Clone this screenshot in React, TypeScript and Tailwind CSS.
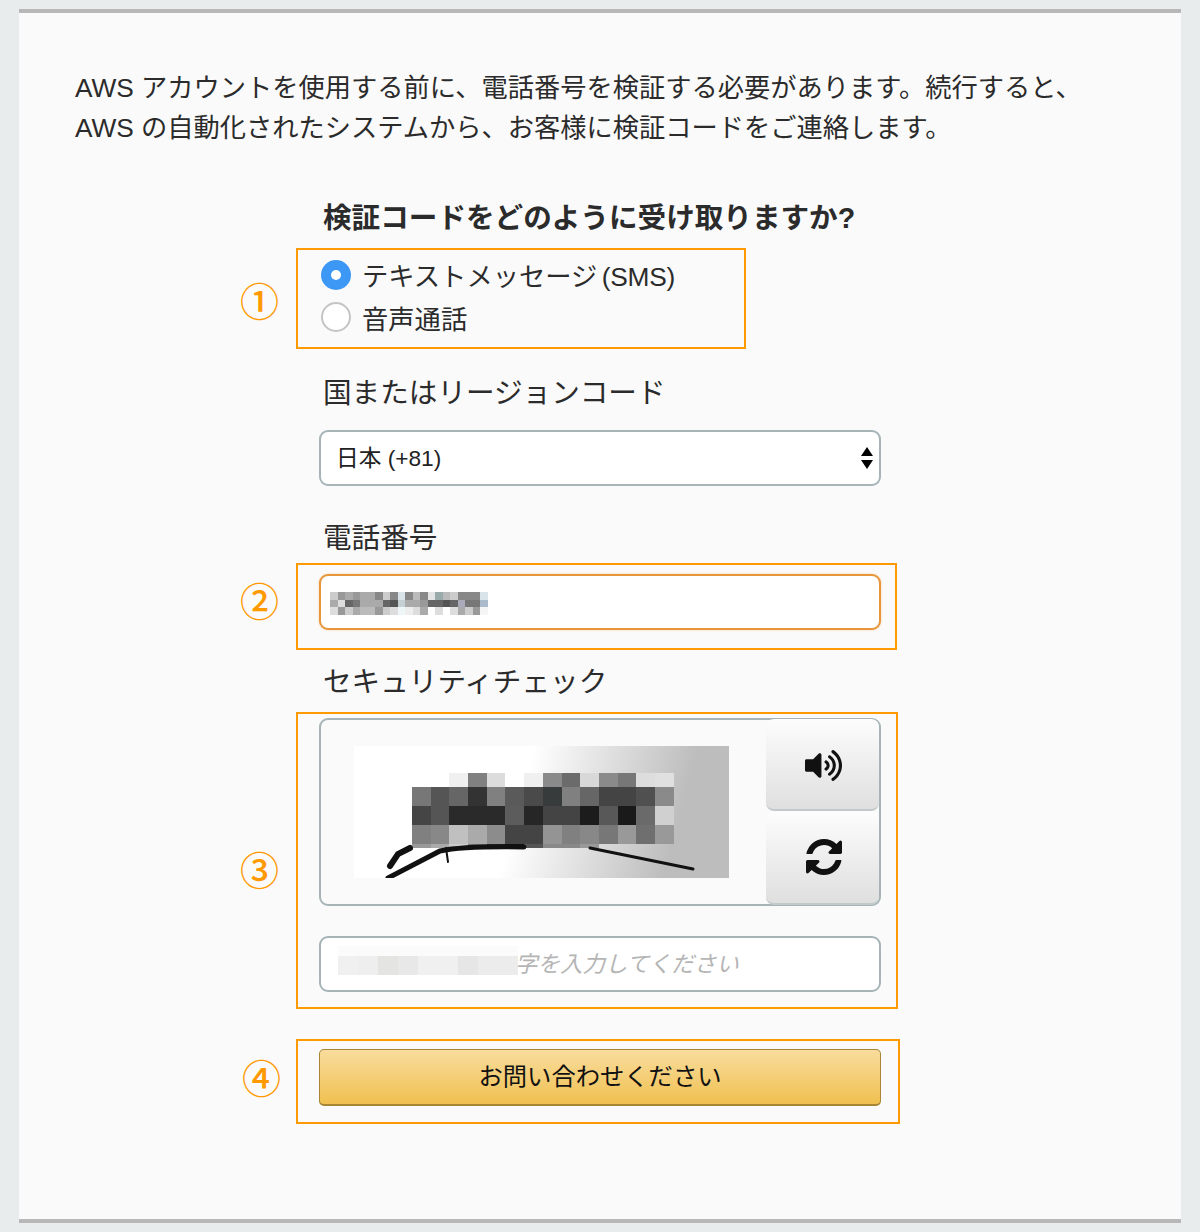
import { FaVolumeUp } from "react-icons/fa";

const FONT = "[font-family:'Liberation_Sans','Noto_Sans_CJK_JP',sans-serif]";

// Blurred-out bits of the picture, listed row by row.
const phoneMosaic = [
  ["#ccc", "#999", "#aaa", "#999", "#aaa", "#aaa", "#888", "#ccc", "#888", "#d8e4ea", "#888", "#bbb", "#888", "#e4e4e4", "#99aaaa", "#bbb", "#ccc", "#888", "#888", "#888", "#d8e4ea"],
  ["#aaa", "#ddd", "#666", "#777", "#aaa", "#aaa", "#aaa", "#666", "#555", "#c4d0d4", "#aaa", "#aaa", "#999", "#666", "#666", "#555", "#666", "#aaaabb", "#777", "#777", "#acbbcc"],
  ["#ddd", "#999", "#ccc", "#aaa", "#bbb", "#bbb", "#999", "#ccc", "#ddd", "#eef6f8", "#eee", "#ddd", "#aaa", "#fff", "#ddd", "#fff", "#ddd", "#aaa", "#ccc", "#999", "#f5f5f5"],
];

const captchaMosaic = [
  { h: 14, cells: ["", "", "#f0f0f0", "#808080", "#dcdcdc", "", "#f0f0f0", "#8a8a8a", "#6b6b6b", "#d8d8d8", "#8a8a8a", "#777", "#ddd", "#e0e0e0"] },
  { h: 19, cells: ["#777", "#555", "#666", "#333", "#808080", "#5a5a5a", "#4a4a4a", "#383b3b", "#808080", "#666", "#444", "#444", "#505050", "#8a8a8a"] },
  { h: 19, cells: ["#454545", "#555", "#2a2a2a", "#2a2a2a", "#2a2a2a", "#5c5c5c", "#262626", "#444", "#444", "#1c1c1c", "#585858", "#1a1a1a", "#6a6a6a", "#d0d0d0"] },
  { h: 19, cells: ["#808080", "#888", "#c0c0c0", "#aaa", "#8c8c8c", "#444", "#444", "#949494", "#808080", "#888", "#777", "#999", "#6f6f6f", "#999"] },
  { h: 4, cells: ["#999", "#aaa", "#ccc", "#777", "#333", "#111", "#555", "#888", "#888", "#999", "", "", "", ""] },
];

const hintMosaic = ["#f0f0f0", "#eee", "#e4e4e2", "#e8e8e8", "#f0f0f0", "#f0f0f0", "#e6e6e6", "#ececec", "#ececec"];

function Mosaic({ rows, cell }: { rows: { h: number; cells: string[] }[]; cell: number }) {
  return (
    <div className="flex flex-col">
      {rows.map((row, i) => (
        <div key={i} className="flex">
          {row.cells.map((c, j) => (
            <div key={j} style={{ width: cell, height: row.h, backgroundColor: c || "transparent" }} />
          ))}
        </div>
      ))}
    </div>
  );
}

function Marked({ n, nudge, className, children }: { n: string; nudge: string; className: string; children: React.ReactNode }) {
  return (
    <div className="flex items-center">
      <span className={`w-[56px] shrink-0 text-[39px] font-medium leading-none text-[#ff9900] ${nudge}`}>{n}</span>
      <div className={`border-2 border-[#ff9900] ${className}`}>{children}</div>
    </div>
  );
}

function Label({ className, children }: { className: string; children: React.ReactNode }) {
  return <div className={`ml-[83px] h-[40px] text-[28.6px] leading-[42px] text-[#2b2b2b] ${className}`}>{children}</div>;
}

export default function App() {
  return (
    <div className={`h-[1232px] bg-[#e9eced] pt-[9px] ${FONT}`}>
      <div className="mx-[19px] h-[1214px] border-y-4 border-[#b7b7b7] bg-[#fafafa]">
        <p className="ml-[56px] mt-[54px] h-[80px] pt-[1px] text-[26.25px] leading-[40px] text-[#2b2b2b]">
          AWS アカウントを使用する前に、電話番号を検証する必要があります。続行すると、
          <br />
          AWS の自動化されたシステムから、お客様に検証コードをご連絡します。
        </p>

        <div className="ml-[221px] mt-[50px]">
          <Label className="font-bold">検証コードをどのように受け取りますか?</Label>

          <div className="mt-[11px]">
            <Marked n="①" nudge="pt-[8px]" className="h-[101px] w-[450px] pl-[23px] pt-[9px]">
              <div className="flex h-[32px] items-center gap-[11px] text-[26.3px] text-[#2b2b2b]">
                <span className="flex size-[30px] items-center justify-center rounded-full bg-[#3d97f5]">
                  <span className="size-[10px] rounded-full bg-white" />
                </span>
                <span className="pt-[6px]">
                  テキストメッセージ <span className="-ml-[3px] tracking-[-0.2px]">(SMS)</span>
                </span>
              </div>
              <div className="mt-[10px] flex h-[32px] items-center gap-[11px] text-[26.3px] text-[#2b2b2b]">
                <span className="size-[30px] rounded-full border-2 border-[#c4c4c4] bg-white" />
                <span className="pt-[8px]">音声通話</span>
              </div>
            </Marked>
          </div>

          <Label className="mt-[23px]">国またはリージョンコード</Label>
          <div className="ml-[79px] mt-[18px] flex h-[56px] w-[562px] items-center justify-between rounded-[9px] border-2 border-[#a6b4b8] bg-white pl-[15px] pr-[5px] text-[22.7px] text-[#222]">
            日本 (+81)
            <svg width="14" height="22" viewBox="0 0 14 22" className="fill-black">
              <path d="M7 0 L13 9 H1 Z M1 13 H13 L7 22 Z" />
            </svg>
          </div>

          <Label className="mt-[31px]">電話番号</Label>
          <div className="mt-[6px]">
            <Marked n="②" nudge="pb-[8px]" className="h-[87px] w-[601px] pl-[21px] pt-[9px]">
              <div className="flex h-[56px] w-[562px] items-center rounded-[9px] border-2 border-[#e8963c] bg-white pl-[9px] pt-[3px] shadow-[0_0_2px_#f5c89a]">
                <Mosaic rows={phoneMosaic.map((cells) => ({ h: 7.6, cells }))} cell={7.5} />
              </div>
            </Marked>
          </div>

          <Label className="mt-[11px]">セキュリティチェック</Label>
          <div className="mt-[11px]">
            <Marked n="③" nudge="pt-[22px]" className="h-[297px] w-[602px] pl-[21px] pt-[4px]">
              <div className="flex h-[188px] w-[562px] rounded-[9px] border-2 border-[#a6b4b8] bg-[#fafafa]">
                <div className="w-[446px] pl-[33px] pt-[26px]">
                  <div className="relative h-[132px] w-[375px] bg-[linear-gradient(105deg,#fff_44%,#bdbdbd_84%)]">
                    <div className="absolute left-[58px] top-[27px]">
                      <Mosaic rows={captchaMosaic} cell={18.7} />
                    </div>
                    <svg className="absolute left-0 top-[80px]" width="375" height="52" viewBox="0 0 375 52" fill="none" stroke="#111" strokeLinecap="round">
                      <path d="M56 22 L44 28 L36 40" strokeWidth="6" />
                      <path d="M34 52 L86 25 Q110 20 170 21" strokeWidth="5" />
                      <path d="M92 22 L94 36" strokeWidth="2" />
                      <path d="M236 22 L339 43" strokeWidth="3" />
                    </svg>
                  </div>
                </div>
                <div className="-my-[1px] flex w-[113px] flex-col">
                  <div className="flex h-[92px] items-center justify-center rounded-[8px] border-b-2 border-[#c2c9cb] bg-[linear-gradient(#fdfdfd,#dfdfdf)] pl-[2px] pt-[3px]">
                    <FaVolumeUp className="size-[37px] text-[#111]" />
                  </div>
                  <div className="flex h-[94px] items-center justify-center rounded-[8px] border-b-2 border-[#c2c9cb] bg-[linear-gradient(#fdfdfd,#dfdfdf)] pl-[2px]">
                    <svg viewBox="0 0 1792 1792" className="size-[42px] fill-[#111]">
                      <path d="M1639 1056q0 5-1 7-64 268-268 434.5t-478 166.5q-146 0-282.5-55t-243.5-157l-129 129q-19 19-45 19t-45-19-19-45v-448q0-26 19-45t45-19h448q26 0 45 19t19 45-19 45l-137 137q71 66 161 102t187 36q134 0 250-65t186-179q11-17 53-117 8-23 30-23h192q13 0 22.5 9.5t9.5 22.5zm25-800v448q0 26-19 45t-45 19h-448q-26 0-45-19t-19-45 19-45l138-138q-148-137-349-137-134 0-250 65t-186 179q-11 17-53 117-8 23-30 23h-199q-13 0-22.5-9.5t-9.5-22.5v-7q65-268 270-434.5t480-166.5q146 0 284 55.5t245 156.5l130-129q19-19 45-19t45 19 19 45z" />
                    </svg>
                  </div>
                </div>
              </div>
              <div className="mt-[30px] flex h-[56px] w-[562px] items-center rounded-[9px] border-2 border-[#a6b4b8] bg-white pl-[17px]">
                <div className="flex flex-col pb-[7px]">
                  <div className="h-[10px] w-[180px] bg-[#fbfbfb]" />
                  <div className="flex">
                    {hintMosaic.map((c, i) => (
                      <div key={i} className="h-[19px] w-[20px]" style={{ backgroundColor: c }} />
                    ))}
                  </div>
                </div>
                <span className="-ml-[3px] pt-[2px] text-[22.5px] italic text-[#b5b5b5]">字を入力してください</span>
              </div>
            </Marked>
          </div>

          <div className="mt-[30px]">
            <Marked n="④" nudge="pb-[4px] pl-[2px]" className="h-[85px] w-[604px] pl-[21px] pt-[8px]">
              <div className="flex h-[57px] w-[562px] items-center justify-center rounded-[5px] border border-[#a88734] border-b-2 bg-[linear-gradient(#f9dd9e,#f0c050)] text-[24.3px] text-[#111]">
                お問い合わせください
              </div>
            </Marked>
          </div>
        </div>
      </div>
    </div>
  );
}
